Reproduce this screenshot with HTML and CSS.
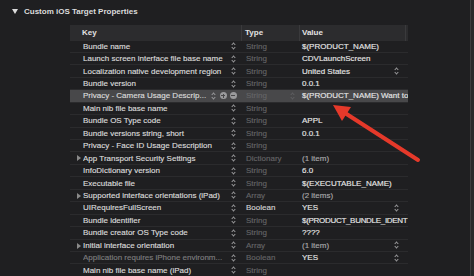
FILE: index.html
```html
<!DOCTYPE html>
<html>
<head>
<meta charset="utf-8">
<link rel="stylesheet" href="styles.css">
</head>
<body>
<div class="page">
  <div class="main">
    <div class="title"><span class="tri-down"></span>Custom iOS Target Properties</div>
    <div class="table">
      <div class="hrow">
        <div class="hcell hkey">Key</div>
        <div class="hcell htype">Type</div>
        <div class="hcell hval">Value</div>
      </div>

      <div class="row">
        <div class="key"><span class="ktext">Bundle name</span><span class="ic step"></span></div>
        <div class="type">String</div>
        <div class="val">$(PRODUCT_NAME)</div>
      </div>
      <div class="row">
        <div class="key"><span class="ktext">Launch screen interface file base name</span><span class="ic step"></span></div>
        <div class="type">String</div>
        <div class="val">CDVLaunchScreen</div>
      </div>
      <div class="row">
        <div class="key"><span class="ktext">Localization native development region</span><span class="ic step"></span></div>
        <div class="type">String</div>
        <div class="val"><span class="vtext">United States</span><span class="ic step vstep"></span></div>
      </div>
      <div class="row">
        <div class="key"><span class="ktext">Bundle version</span><span class="ic step"></span></div>
        <div class="type">String</div>
        <div class="val">0.0.1</div>
      </div>
      <div class="row sel">
        <div class="key"><span class="ktext">Privacy - Camera Usage Descrip...</span><span class="ic step"></span><span class="ic circ plus"></span><span class="ic circ minus"></span></div>
        <div class="type"><span class="ttext">String</span><span class="ic step faint"></span></div>
        <div class="val">$(PRODUCT_NAME) Want to</div>
      </div>
      <div class="row">
        <div class="key"><span class="ktext">Main nib file base name</span><span class="ic step"></span></div>
        <div class="type">String</div>
        <div class="val"></div>
      </div>
      <div class="row">
        <div class="key"><span class="ktext">Bundle OS Type code</span><span class="ic step"></span></div>
        <div class="type">String</div>
        <div class="val">APPL</div>
      </div>
      <div class="row">
        <div class="key"><span class="ktext">Bundle versions string, short</span><span class="ic step"></span></div>
        <div class="type">String</div>
        <div class="val">0.0.1</div>
      </div>
      <div class="row">
        <div class="key"><span class="ktext">Privacy - Face ID Usage Description</span><span class="ic step"></span></div>
        <div class="type">String</div>
        <div class="val"></div>
      </div>
      <div class="row">
        <div class="key"><span class="tri-right"></span><span class="ktext">App Transport Security Settings</span><span class="ic step"></span></div>
        <div class="type">Dictionary</div>
        <div class="val dim">(1 item)</div>
      </div>
      <div class="row">
        <div class="key"><span class="ktext">InfoDictionary version</span><span class="ic step"></span></div>
        <div class="type">String</div>
        <div class="val">6.0</div>
      </div>
      <div class="row">
        <div class="key"><span class="ktext">Executable file</span><span class="ic step"></span></div>
        <div class="type">String</div>
        <div class="val">$(EXECUTABLE_NAME)</div>
      </div>
      <div class="row">
        <div class="key"><span class="tri-right"></span><span class="ktext">Supported interface orientations (iPad)</span><span class="ic step"></span></div>
        <div class="type">Array</div>
        <div class="val dim">(2 items)</div>
      </div>
      <div class="row">
        <div class="key"><span class="ktext">UIRequiresFullScreen</span><span class="ic step"></span></div>
        <div class="type bright">Boolean</div>
        <div class="val"><span class="vtext">YES</span><span class="ic step vstep"></span></div>
      </div>
      <div class="row">
        <div class="key"><span class="ktext">Bundle identifier</span><span class="ic step"></span></div>
        <div class="type">String</div>
        <div class="val tight">$(PRODUCT_BUNDLE_IDENT</div>
      </div>
      <div class="row">
        <div class="key"><span class="ktext">Bundle creator OS Type code</span><span class="ic step"></span></div>
        <div class="type">String</div>
        <div class="val">????</div>
      </div>
      <div class="row">
        <div class="key"><span class="tri-right"></span><span class="ktext">Initial interface orientation</span><span class="ic step"></span></div>
        <div class="type">Array</div>
        <div class="val dim"><span class="vtext">(1 item)</span><span class="ic step vstep"></span></div>
      </div>
      <div class="row">
        <div class="key"><span class="ktext kdim">Application requires iPhone environm...</span><span class="ic step"></span></div>
        <div class="type">Boolean</div>
        <div class="val"><span class="vtext">YES</span><span class="ic step vstep"></span></div>
      </div>
      <div class="row">
        <div class="key"><span class="ktext">Main nib file base name (iPad)</span><span class="ic step"></span></div>
        <div class="type">String</div>
        <div class="val"></div>
      </div>
    </div>
  </div>
  <div class="scroll"></div>
</div>
<svg class="arrow" width="474" height="276" viewBox="0 0 474 276">
  <line x1="418" y1="160" x2="345" y2="113" stroke="#e5392a" stroke-width="4" stroke-linecap="round"/>
  <polygon points="333,105 351,107 342,121" fill="#e5392a"/>
</svg>
</body>
</html>
```

FILE: styles.css
```css
html, body {
  margin: 0;
  padding: 0;
  background: #1f1f21;
}
body {
  width: 474px;
  height: 276px;
  overflow: hidden;
  position: relative;
  font-family: "Liberation Sans", Arial, sans-serif;
  font-size: 8px;
  color: #dadada;
  -webkit-text-stroke: 0.15px currentColor;
}
.page {
  display: flex;
  height: 276px;
}
.main {
  flex: 1;
  min-width: 0;
}
.scroll {
  width: 3px;
  border-left: 1px solid #3c3c3e;
  background: #28282a;
}
.title {
  display: flex;
  align-items: center;
  height: 24px;
  padding-left: 12px;
  font-weight: 700;
  font-size: 8px;
  color: #dcdcdc;
  box-sizing: border-box;
  padding-bottom: 1px;
  -webkit-text-stroke: 0;
}
.tri-down {
  width: 0;
  height: 0;
  border-left: 3px solid transparent;
  border-right: 3px solid transparent;
  border-top: 5px solid #dcdcdc;
  margin-right: 6px;
}
.table {
  margin-left: 70px;
  width: 338px;
  margin-top: 1px;
}
.hrow {
  display: grid;
  grid-template-columns: 171px 58px 107px;
  height: 15.5px;
  background: #2c2c2e;
  font-weight: 700;
  color: #e2e2e2;
  -webkit-text-stroke: 0;
}
.hcell {
  display: flex;
  align-items: center;
  box-sizing: border-box;
}
.hkey { padding-left: 12px; }
.htype { padding-left: 3px; border-left: 1px solid #3a3a3c; }
.hval { padding-left: 2px; border-left: 1px solid #3a3a3c; border-right: 1px solid #3a3a3c; }
.row {
  display: grid;
  grid-template-columns: 171px 58px 109px;
  height: 12.45px;
  box-sizing: border-box;
  border-bottom: 1px solid #2b2b2d;
}
.row.sel {
  background: #48484a;
}
.key, .type, .val {
  display: flex;
  align-items: center;
  min-width: 0;
  overflow: hidden;
  white-space: nowrap;
  box-sizing: border-box;
}
.key {
  padding-left: 13px;
  padding-right: 4px;
  position: relative;
  gap: 2px;
}
.ktext, .vtext, .ttext {
  flex: 1;
  min-width: 0;
  overflow: hidden;
}
.kdim { color: #7c7c7e; }
.tri-right {
  position: absolute;
  left: 7px;
  top: 3px;
  width: 0;
  height: 0;
  border-top: 3px solid transparent;
  border-bottom: 3px solid transparent;
  border-left: 4px solid #8a8a8a;
}
.type {
  padding-left: 5px;
  padding-right: 3px;
  color: #646466;
}
.type.bright { color: #d2d2d2; }
.val {
  padding-left: 3px;
  padding-right: 0;
  color: #e6e6e6;
}
.val.dim { color: #a8a8aa; }
.val.tight { letter-spacing: -0.3px; }
.ic {
  flex: none;
  width: 8px;
  height: 9px;
  position: relative;
}
.vstep { margin-right: 8px; }
.step::before, .step::after {
  content: "";
  position: absolute;
  left: 2.5px;
  width: 2px;
  height: 2px;
  border-color: #98989a;
  border-style: solid;
  border-width: 0;
}
.step::before {
  top: 1.5px;
  border-top-width: 1px;
  border-left-width: 1px;
  transform: rotate(45deg);
}
.step::after {
  bottom: 1.5px;
  border-bottom-width: 1px;
  border-right-width: 1px;
  transform: rotate(45deg);
}
.step.faint::before, .step.faint::after { border-color: #5e5e60; }
.circ::before {
  content: "";
  position: absolute;
  left: 0.5px;
  top: 1px;
  width: 7px;
  height: 7px;
  border-radius: 50%;
  background: #9a9a9c;
}
.circ::after {
  content: "";
  position: absolute;
  left: 2px;
  top: 4px;
  width: 4px;
  height: 1px;
  background: #48484a;
}
.plus::after {
  background:
    linear-gradient(#48484a, #48484a) center / 4px 1px no-repeat,
    linear-gradient(#48484a, #48484a) center / 1px 4px no-repeat;
  top: 2.5px;
  height: 4px;
  background-color: transparent;
}
.arrow {
  position: absolute;
  left: 0;
  top: 0;
  pointer-events: none;
}
```
